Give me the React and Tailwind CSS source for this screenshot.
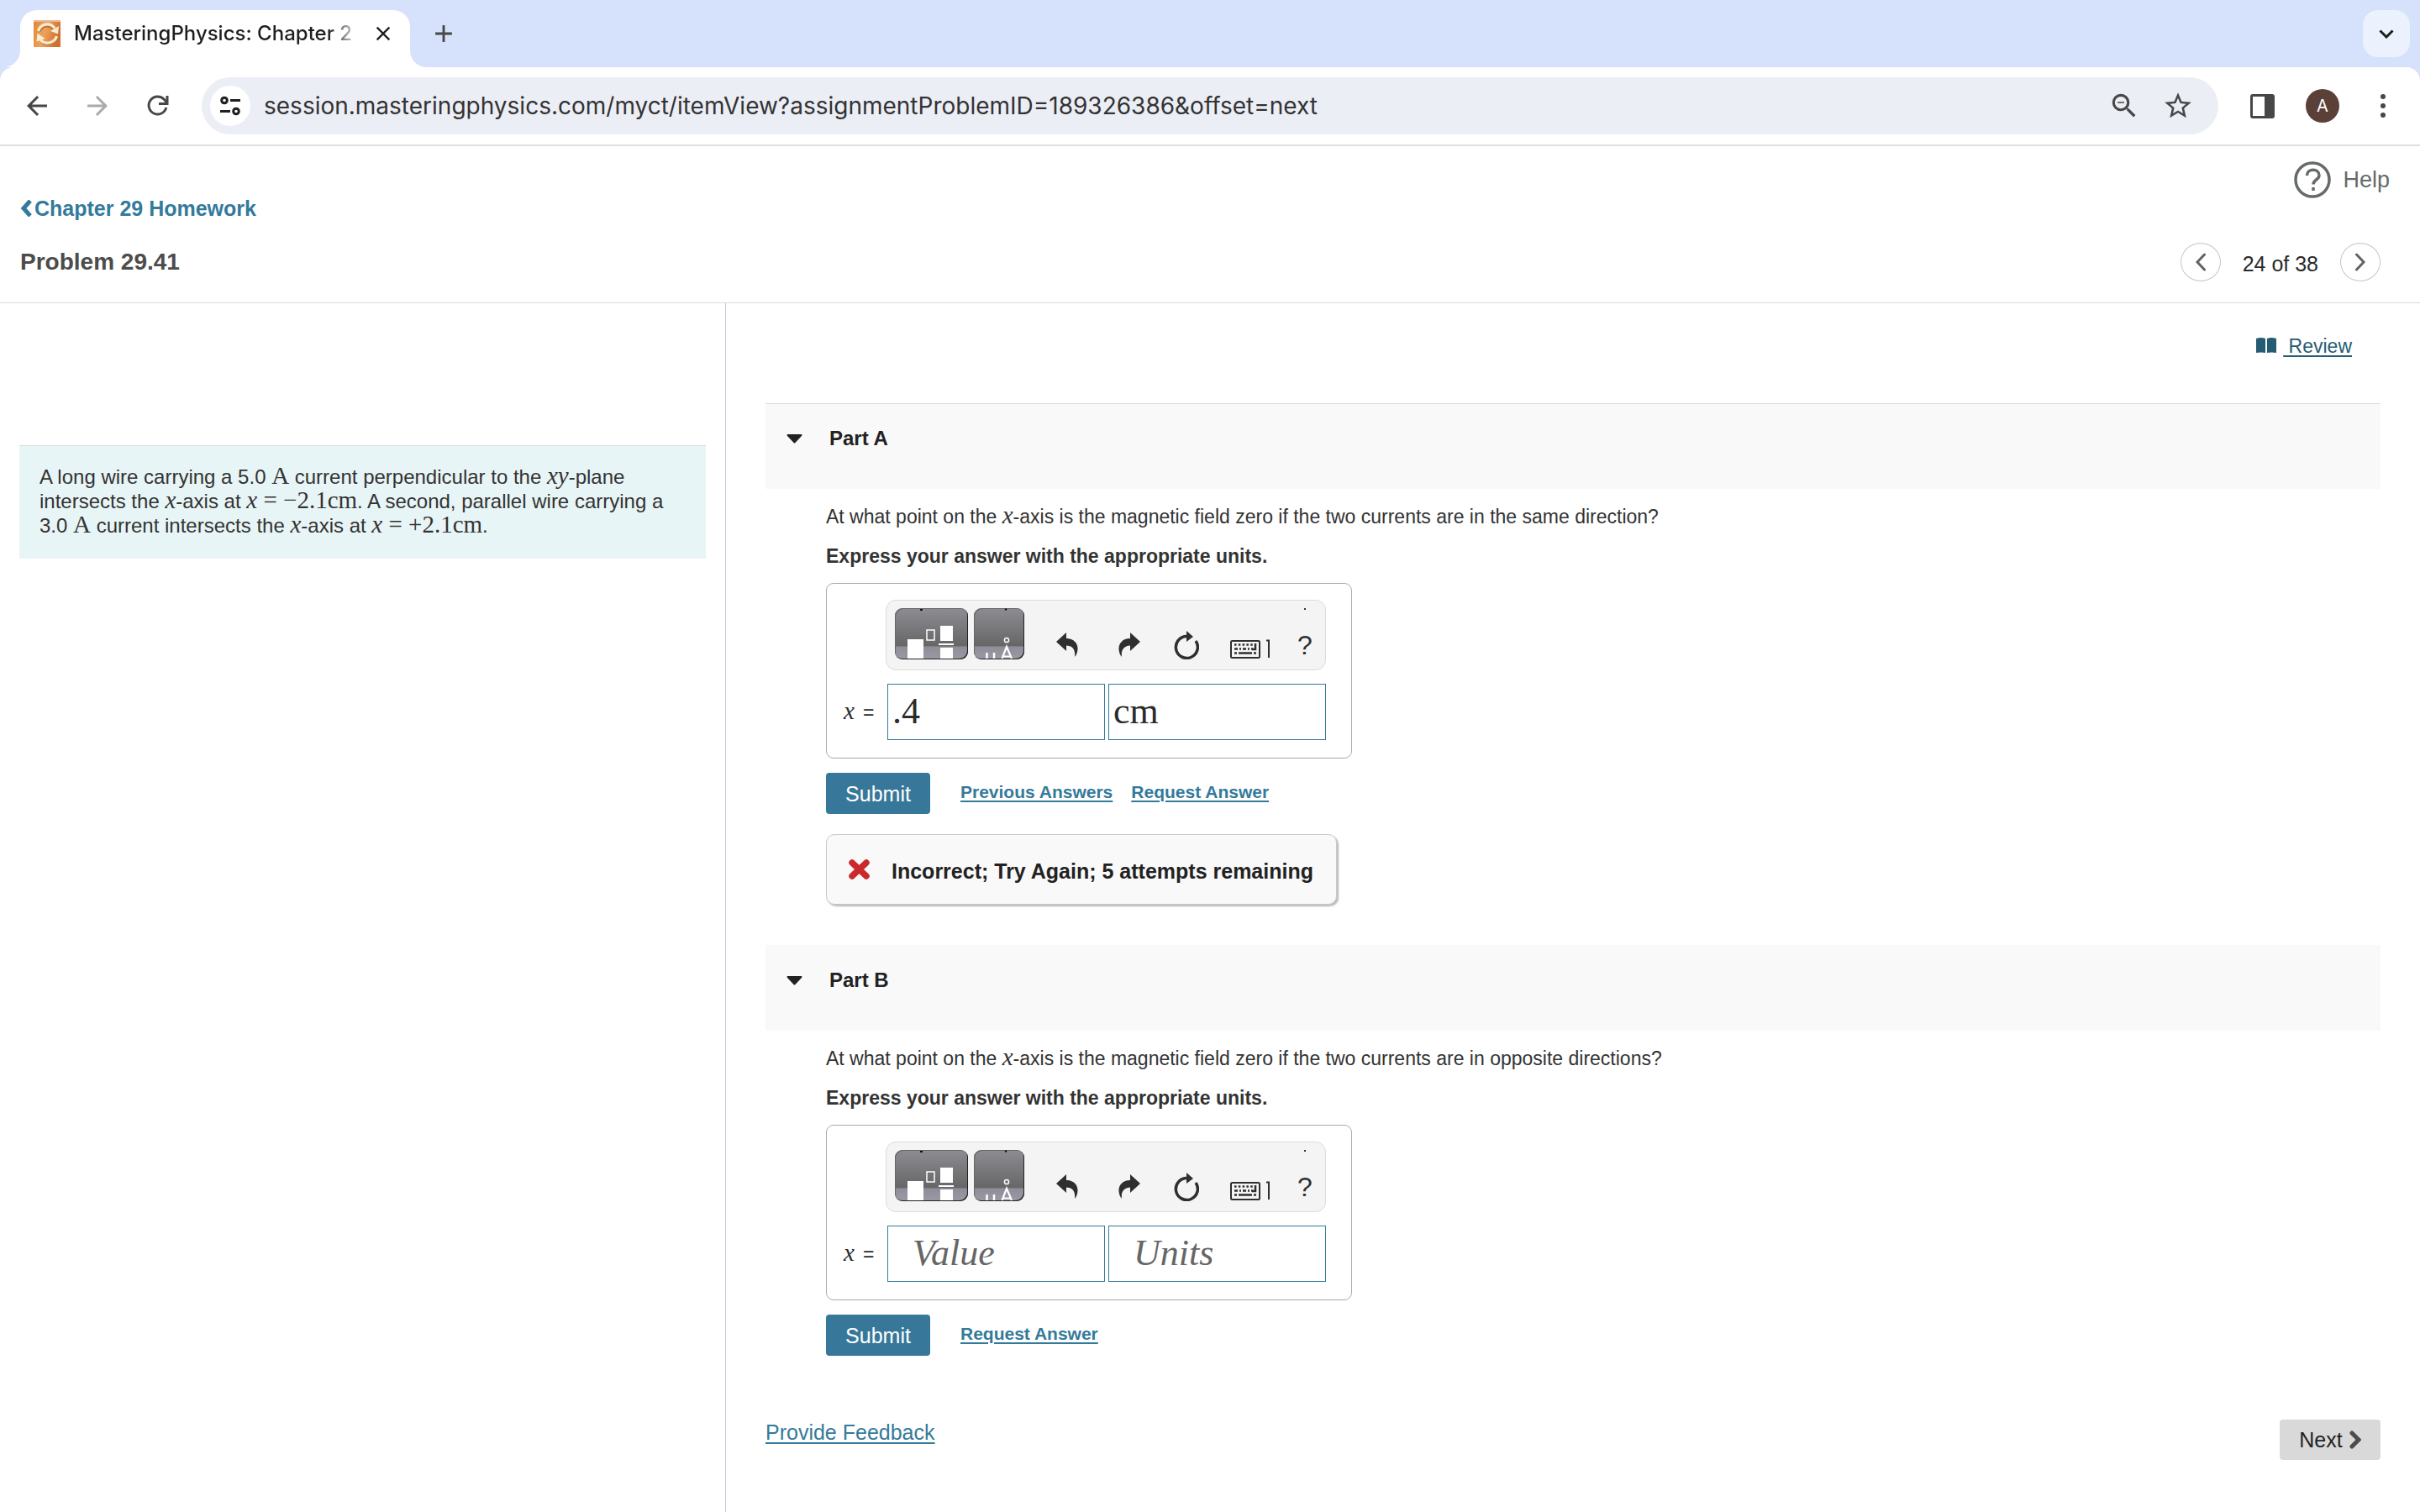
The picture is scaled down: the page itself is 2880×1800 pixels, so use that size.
import { useState } from 'react';
import { MdAdd, MdArrowBack, MdArrowForward, MdClose, MdStarBorder, MdZoomOut } from 'react-icons/md';

const parts = [
  {
    id: 'a',
    title: 'Part A',
    ending: 'the same direction?',
    value: '.4',
    units: 'cm',
    links: ['Previous Answers', 'Request Answer'],
    feedback: 'Incorrect; Try Again; 5 attempts remaining',
  },
  {
    id: 'b',
    title: 'Part B',
    ending: 'opposite directions?',
    value: '',
    units: '',
    links: ['Request Answer'],
    feedback: null,
  },
];

function Var({ children }) {
  return <i className="font-['Liberation_Serif',serif] text-[29px] leading-[0]">{children}</i>;
}

function Num({ children }) {
  return <span className="font-['Liberation_Serif',serif] text-[29px] leading-[0] whitespace-pre">{children}</span>;
}

function Favicon() {
  return (
    <svg viewBox="0 0 32 32" className="size-8 shrink-0">
      <defs>
        <linearGradient id="fav" x1="0" y1="0" x2="1" y2="0.3">
          <stop offset="0" stopColor="#e0853a" />
          <stop offset="0.5" stopColor="#eda35c" />
          <stop offset="1" stopColor="#d0702e" />
        </linearGradient>
      </defs>
      <rect width="32" height="32" fill="url(#fav)" />
      <rect width="32" height="2" fill="#e7b78e" />
      <g fill="none" stroke="#a85a22" strokeWidth="3" opacity="0.6">
        <path d="M7 13.500a10 9.500 0 0 1 17-3" />
        <path d="M27 21a11 10 0 0 1-18 4" />
      </g>
      <g fill="none" stroke="#f6ecd0" strokeWidth="3.200">
        <path d="M5.500 13A11 11 0 0 1 25 9.500" />
        <path d="M27.500 19A11.500 11 0 0 1 8 23.500" />
      </g>
      <path d="M30 7l-1 9.500-9-3.500zM3.500 25.500l1-10 9 6.500z" fill="#f6ecd0" />
    </svg>
  );
}

function ReloadIcon() {
  return (
    <svg viewBox="0 0 26 26" className="size-[26px]" fill="none" stroke="currentColor" strokeWidth="3">
      <path d="M22.800 15A10.500 10.500 0 1 1 20.500 5.600L23.500 9" />
      <path d="M24 1v9.500h-10" />
    </svg>
  );
}

function SiteIcon() {
  return (
    <svg viewBox="0 0 24 24" className="size-6" fill="none" stroke="#1f1f1f" strokeWidth="3">
      <circle cx="5" cy="5.500" r="3.300" />
      <path d="M12 5.500h12M0 18.500h12" />
      <circle cx="19" cy="18.500" r="3.300" />
    </svg>
  );
}

function BrowserTabs() {
  return (
    <div className="flex h-20 items-end bg-[#d6e1fb] pl-1 font-['Inter',sans-serif]">
      <svg viewBox="0 0 20 20" className="size-5 shrink-0">
        <path d="M20 0v20H0A20 20 0 0 0 20 0z" fill="#fff" />
      </svg>
      <div className="flex h-[68px] w-[464px] items-start rounded-t-[20px] bg-white pt-3 pl-4">
        <Favicon />
        <span className="ml-4 w-[336px] text-[24px] leading-8 font-medium whitespace-nowrap text-[#1f1f1f] [mask-image:linear-gradient(to_right,black_90%,transparent_102%)]">
          MasteringPhysics: Chapter 2
        </span>
        <button aria-label="Close tab" className="ml-4 flex size-8 items-center justify-center text-[#1f1f1f]">
          <MdClose className="size-7" />
        </button>
      </div>
      <svg viewBox="0 0 20 20" className="size-5 shrink-0">
        <path d="M0 0v20h20A20 20 0 0 1 0 0z" fill="#fff" />
      </svg>
      <button aria-label="New tab" className="mb-5 flex size-10 items-center justify-center text-[#474747]">
        <MdAdd className="size-[34px]" />
      </button>
      <button aria-label="Search tabs" className="mr-3 mb-3 ml-auto flex size-14 items-center justify-center rounded-[18px] bg-[#ebf2fe] text-[#1f1f1f]">
        <svg viewBox="0 0 18 11" className="h-[11px] w-[18px]" fill="none" stroke="currentColor" strokeWidth="3">
          <path d="M1.500 1.500L9 9l7.500-7.500" />
        </svg>
      </button>
    </div>
  );
}

function BrowserToolbar() {
  return (
    <div className="bg-[#d6e1fb]">
      <div className="flex h-[94px] items-center rounded-t-2xl border-b-2 border-[#dfdfdf] bg-white px-4 font-['Inter',sans-serif] text-[#474747]">
        <div className="flex gap-4">
          <button aria-label="Back" className="flex size-14 items-center justify-center">
            <MdArrowBack className="size-9" />
          </button>
          <button aria-label="Forward" className="flex size-14 items-center justify-center text-[#ababab]">
            <MdArrowForward className="size-9" />
          </button>
          <button aria-label="Reload" className="flex size-14 items-center justify-center">
            <ReloadIcon />
          </button>
        </div>
        <div className="mx-6 flex h-[68px] flex-1 items-center rounded-full bg-[#eceef6] pr-[29px] pl-[10px]">
          <button aria-label="View site information" className="flex size-12 shrink-0 items-center justify-center rounded-full bg-white">
            <SiteIcon />
          </button>
          <input
            aria-label="Address"
            className="ml-4 flex-1 bg-transparent text-[28px] text-[#333] outline-none"
            defaultValue="session.masteringphysics.com/myct/itemView?assignmentProblemID=189326386&offset=next"
          />
          <button aria-label="Zoom">
            <MdZoomOut className="size-[38px]" />
          </button>
          <button aria-label="Bookmark this page" className="ml-[26px]">
            <MdStarBorder className="size-[38px]" />
          </button>
        </div>
        <div className="flex gap-4">
          <button aria-label="Side panel" className="flex size-14 items-center justify-center">
            <svg viewBox="0 0 30 30" className="size-[30px]">
              <rect x="2.500" y="2.500" width="26" height="26" rx="1.500" fill="none" stroke="currentColor" strokeWidth="3" />
              <rect x="18" y="2" width="11" height="27" fill="currentColor" />
            </svg>
          </button>
          <button aria-label="Profile" className="flex size-14 items-center justify-center">
            <span className="flex size-10 items-center justify-center rounded-full bg-[#5b4037] text-[20px] text-white">A</span>
          </button>
          <button aria-label="Menu" className="flex size-14 items-center justify-center">
            <svg viewBox="0 0 6 28" className="h-7 w-[6px]" fill="currentColor">
              <circle cx="3" cy="3" r="3" />
              <circle cx="3" cy="14" r="3" />
              <circle cx="3" cy="25" r="3" />
            </svg>
          </button>
        </div>
      </div>
    </div>
  );
}

function PagerButton({ label, d }) {
  return (
    <button aria-label={label} className="flex h-[46px] w-12 items-center justify-center rounded-[50%] border border-[#c4c4c4] text-[#5f6363]">
      <svg viewBox="0 0 12 22" className="h-[22px] w-3" fill="none" stroke="currentColor" strokeWidth="3" strokeLinecap="round">
        <path d={d} />
      </svg>
    </button>
  );
}

function PageHeader() {
  return (
    <header className="flex justify-between border-b border-[#dcdcdc] pl-6">
      <div className="pt-[58px] pb-8">
        <a href="#chapter" className="flex items-center text-[25px] leading-8 font-bold text-[#337a9b]">
          <svg viewBox="0 0 14 20" className="mr-[3px] h-5 w-[14px]" fill="none" stroke="currentColor" strokeWidth="5">
            <path d="M12 1L4 10l8 9" />
          </svg>
          Chapter 29 Homework
        </a>
        <h1 className="mt-8 text-[28px] leading-8 font-bold text-[#4c4c4c]">Problem 29.41</h1>
      </div>
      <div className="flex flex-col items-end pt-[18px]">
        <a href="#help" className="mr-9 flex items-center gap-[14px] text-[27px] leading-8 text-[#666b6a]">
          <svg viewBox="0 0 44 44" className="size-11" fill="none" stroke="currentColor" strokeWidth="3.500">
            <circle cx="22" cy="22" r="20" />
            <path d="M15.500 17c0-9 14.500-9 14.500 0 0 5-7 4.500-7 10.500" />
            <path d="M23 31v4" />
          </svg>
          Help
        </a>
        <div className="mt-[53px] mr-[47px] flex items-center gap-[26px]">
          <PagerButton label="Previous item" d="M10.500 2L2 11l8.500 9" />
          <span className="pt-1 text-[25px] leading-8 text-[#2b2b2b]">24 of 38</span>
          <PagerButton label="Next item" d="M1.500 2L10 11l-8.500 9" />
        </div>
      </div>
    </header>
  );
}

function TemplatesIcon() {
  return (
    <svg viewBox="0 0 87 61" className="h-[61px] w-[87px]">
      <path d="M30 1h3v2h-3z" fill="#111" />
      <g fill="#fff">
        <path d="M15 37h19v23H15zM54 21h15v18H54zM52 42h18v2H52zM54 47h15v13H54z" />
      </g>
      <rect x="38" y="26" width="9" height="12" fill="none" stroke="#fff" strokeWidth="1.500" />
    </svg>
  );
}

function SymbolsIcon() {
  return (
    <svg viewBox="0 0 60 61" className="h-[61px] w-[60px]" fill="none" stroke="#fff" strokeWidth="2">
      <path d="M37 2l2-1" stroke="#111" />
      <path d="M15.500 53v7M24 53v7" strokeWidth="2.500" />
      <circle cx="39" cy="38" r="2.600" strokeWidth="1.500" />
      <path d="M33.500 60L39 46l6 14M35 57.500h8" strokeWidth="2.200" />
    </svg>
  );
}

function KeyboardIcon() {
  return (
    <svg viewBox="0 0 48 61" className="h-[61px] w-12" fill="none" stroke="currentColor">
      <rect x="1" y="39" width="34" height="20" rx="1.500" strokeWidth="2" />
      <path d="M5 43.500h22" strokeWidth="2.500" strokeDasharray="2.500 2.300" />
      <path d="M5 48.500h22" strokeWidth="2.500" strokeDasharray="4 2 2 2" />
      <path d="M30 42v7h-4" strokeWidth="2.500" />
      <path d="M5 53.500h3M10 53.500h16M28 53.500h3" strokeWidth="2.500" />
      <path d="M43 38.500h3V59" strokeWidth="2" />
    </svg>
  );
}

const darkButton =
  'overflow-hidden rounded-[9px] bg-[linear-gradient(#8d8c93,#666_74%,#8f8e98_75%,#9a99a4)] shadow-[inset_-1px_-1px_0_#222,inset_1px_1px_0_#666]';

function MathToolbar() {
  return (
    <div className="flex h-[84px] w-[524px] items-start rounded-[12px] border border-[#dcdcdc] bg-[#f4f4f4] pt-[9px] pl-[10px] text-[#2f2f2f]">
      <button aria-label="Templates" className={darkButton}>
        <TemplatesIcon />
      </button>
      <button aria-label="Symbols" className={'ml-[7px] ' + darkButton}>
        <SymbolsIcon />
      </button>
      <button aria-label="Undo" className="ml-[38px]">
        <svg viewBox="0 0 26 61" className="h-[61px] w-[26px]" fill="currentColor">
          <path d="M0 40L12 29v7c9 0 14 6 13.500 13-.3 4-1.500 7-3.500 9 1-8-2-13-10-13.500V51z" />
        </svg>
      </button>
      <button aria-label="Redo" className="ml-12">
        <svg viewBox="0 0 26 61" className="h-[61px] w-[26px]" fill="currentColor">
          <path d="M26 40L14 29v7c-9 0-14 6-13.500 13 .3 4 1.500 7 3.500 9-1-8 2-13 10-13.500V51z" />
        </svg>
      </button>
      <button aria-label="Reset" className="ml-10">
        <svg viewBox="0 0 30 61" className="h-[61px] w-[30px]">
          <path d="M26 39A13 13 0 1 1 16 33.500" fill="none" stroke="currentColor" strokeWidth="3.500" />
          <path d="M15 27l8 7-8 6z" fill="currentColor" />
        </svg>
      </button>
      <button aria-label="Keyboard shortcuts" className="ml-[37px]">
        <KeyboardIcon />
      </button>
      <button aria-label="Toolbar help" className="ml-8 flex flex-col items-center gap-6">
        <span className="size-[2px] bg-[#333]" />
        <span className="text-[32px] leading-9">?</span>
      </button>
    </div>
  );
}

function AnswerBox({ part }) {
  const [value, setValue] = useState(part.value);
  const [units, setUnits] = useState(part.units);

  const field =
    "h-[67px] w-[259px] border border-[#337a9b] bg-white font-['Liberation_Serif',serif] text-[44px] text-[#2b2b2b] outline-none placeholder:italic placeholder:text-[#666] placeholder-shown:pl-[29px] pl-[5px] pb-[2px]";

  return (
    <div className="mt-[18px] w-fit rounded-[9px] border border-[#aaa] pt-[19px] pr-[30px] pb-[21px] pl-5">
      <div className="ml-[50px]">
        <MathToolbar />
      </div>
      <div className="mt-4 flex items-center">
        <label htmlFor={'value-' + part.id} className="w-[52px] text-[23px] whitespace-nowrap text-[#2b2b2b]">
          <Var>x</Var>
          <span className="ml-[10px]">=</span>
        </label>
        <input
          id={'value-' + part.id}
          className={field}
          placeholder="Value"
          value={value}
          onChange={(e) => setValue(e.target.value)}
        />
        <input
          aria-label="Units"
          className={'ml-1 ' + field}
          placeholder="Units"
          value={units}
          onChange={(e) => setUnits(e.target.value)}
        />
      </div>
    </div>
  );
}

function Part({ part }) {
  const [open, setOpen] = useState(true);

  return (
    <section className="group">
      <h2 className="border-t border-[#f9f9f9] bg-[#f9f9f9] pt-[27px] pb-[46px] group-first:border-[#dcdcdc]">
        <button
          className="flex w-full items-center gap-8 pl-[25px] text-[24px] leading-7 font-bold text-[#222]"
          aria-expanded={open}
          onClick={() => setOpen(!open)}
        >
          <svg viewBox="0 0 19 11" className="h-[11px] w-[19px]" fill="currentColor">
            <path d="M1 0h17q1 1 0 2l-8 8.500h-1L1 2q-1-1 0-2z" />
          </svg>
          {part.title}
        </button>
      </h2>
      {open && (
        <div className="pt-[19px] pl-[72px] text-[23px] leading-7 text-[#333]">
          <p>
            At what point on the <Var>x</Var>-axis is the magnetic field zero if the two currents are in {part.ending}
          </p>
          <p className="mt-[19px] font-bold">Express your answer with the appropriate units.</p>
          <AnswerBox part={part} />
          <div className="mt-[17px] flex items-center">
            <button className="h-[49px] w-[124px] rounded-[4px] bg-[#37789a] text-[25px] text-white">Submit</button>
            <div className="ml-9 flex gap-[22px] pb-[3px] text-[21px] font-bold text-[#337a9b]">
              {part.links.map((link) => (
                <a key={link} href="#answers" className="underline decoration-2 underline-offset-[3px]">
                  {link}
                </a>
              ))}
            </div>
          </div>
          {part.feedback && (
            <div className="mt-6 flex h-[84px] w-fit items-center rounded-[10px] border border-[#c8c8c8] bg-[#f9f9f9] pt-[3px] pr-[27px] pl-[26px] text-[25px] font-bold text-[#222] shadow-[2px_2px_2px_#bbb]">
              <svg viewBox="0 0 25 24" className="mr-[26px] mb-1 h-6 w-[25px]" stroke="#cb2a2c" strokeWidth="7.500" strokeLinecap="round">
                <path d="M4 4l17 16M21 4L4 20" />
              </svg>
              {part.feedback}
            </div>
          )}
        </div>
      )}
    </section>
  );
}

export default function App() {
  return (
    <div className="flex min-h-screen flex-col bg-white font-['Liberation_Sans',Arial,sans-serif]">
      <BrowserTabs />
      <BrowserToolbar />
      <PageHeader />

      <div className="flex flex-1">
        <aside className="w-[30%] border-r border-[#c3cadb] px-[23px]">
          <div className="mt-[169px] border-t border-[#d6dcdc] bg-[#e8f5f6] pt-[22px] pb-[25px] pl-6 text-[24px] leading-[29px] whitespace-nowrap text-[#333]">
            A long wire carrying a 5.0 <Num>A</Num> current perpendicular to the <Var>xy</Var>-plane
            <br />
            intersects the <Var>x</Var>-axis at <Var>x</Var>
            <Num>{' = −2.1cm'}</Num>. A second, parallel wire carrying a
            <br />
            3.0 <Num>A</Num> current intersects the <Var>x</Var>-axis at <Var>x</Var>
            <Num>{' = +2.1cm'}</Num>.
          </div>
        </aside>

        <main className="flex-1 px-[47px] pt-[37px]">
          <div className="mb-[54px] flex justify-end">
            <a href="#review" className="mr-[34px] flex items-center gap-2 text-[23px] leading-7 text-[#255c72]">
              <svg viewBox="0 0 24 20" className="h-5 w-6" fill="currentColor">
                <path d="M0 1q6-2 11 0v17q-5-1-11 0zM13 1q5-2 11 0v17q-6-1-11 0z" />
              </svg>
              <span className="whitespace-pre underline decoration-2 underline-offset-[3px]"> Review</span>
            </a>
          </div>

          <div className="flex flex-col gap-12">
            {parts.map((part) => (
              <Part key={part.id} part={part} />
            ))}
          </div>

          <footer className="mt-[76px] flex items-start justify-between pb-[62px] text-[25px] leading-[30px]">
            <a href="#feedback" className="text-[#337a9b] underline decoration-2 underline-offset-[3px]">
              Provide Feedback
            </a>
            <button className="flex h-12 w-[120px] items-center justify-center gap-2 rounded-[4px] bg-[#d9d9d9] text-[#222]">
              Next
              <svg viewBox="0 0 14 22" className="h-[22px] w-[14px]" fill="none" stroke="#4c4c4c" strokeWidth="5" strokeLinecap="round">
                <path d="M3 3l8 8-8 8" />
              </svg>
            </button>
          </footer>
        </main>
      </div>
    </div>
  );
}
